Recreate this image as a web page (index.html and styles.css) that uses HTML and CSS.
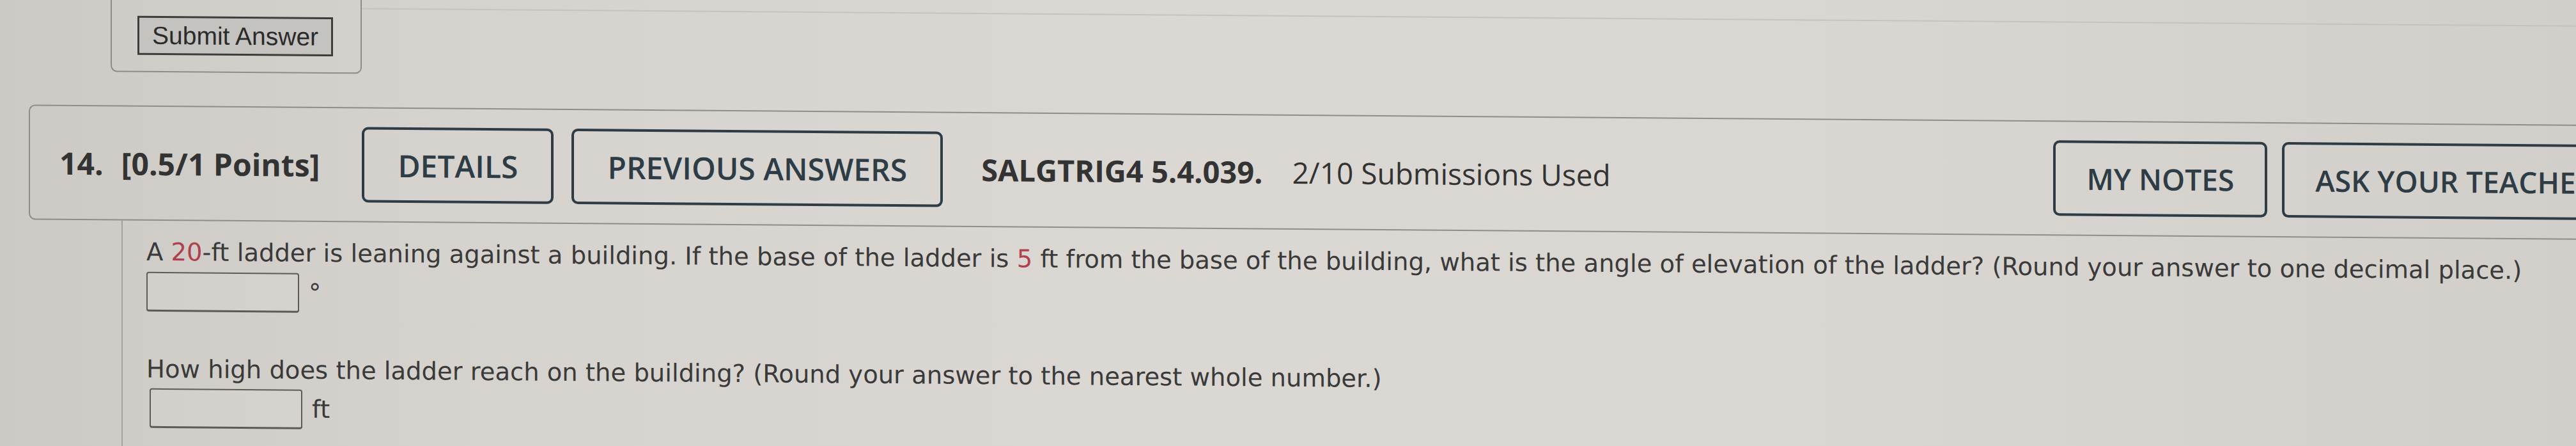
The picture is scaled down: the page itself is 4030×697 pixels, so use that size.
FILE: index.html
```html
<!DOCTYPE html>
<html lang="en">
<head>
<meta charset="utf-8">
<title>Question 14</title>
<link rel="stylesheet" href="styles.css">
</head>
<body>
<div class="sheet">
  <div class="prev-row">
    <div class="submit-box"><button class="submit-btn" type="button">Submit Answer</button></div>
    <div class="prev-rule"></div>
  </div>
  <section class="question">
    <header class="q-head">
      <span class="q-num">14.</span>
      <span class="q-points">[0.5/1 Points]</span>
      <button class="q-btn q-btn-first" type="button">DETAILS</button>
      <button class="q-btn" type="button">PREVIOUS ANSWERS</button>
      <span class="q-code">SALGTRIG4 5.4.039.</span>
      <span class="q-subs">2/10 Submissions Used</span>
      <div class="q-tools">
        <button class="q-btn q-tool" type="button">MY NOTES</button>
        <button class="q-btn q-tool" type="button">ASK YOUR TEACHER</button>
      </div>
    </header>
    <div class="q-body">
      <p class="q-text">A <span class="var">20</span>-ft ladder is leaning against a building. If the base of the ladder is <span class="var">5</span> ft from the base of the building, what is the angle of elevation of the ladder? (Round your answer to one decimal place.)</p>
      <div class="answer"><input class="blank" type="text" aria-label="angle of elevation"><span class="unit">°</span></div>
      <p class="q-text q-text-second">How high does the ladder reach on the building? (Round your answer to the nearest whole number.)</p>
      <div class="answer answer-second"><input class="blank" type="text" aria-label="height reached"><span class="unit">ft</span></div>
    </div>
  </section>
</div>
</body>
</html>
```

FILE: styles.css
```css
html,
body {
  margin: 0;
  height: 697px;
  overflow: hidden;
}

body {
  background: linear-gradient(90deg, #cdcac5 0%, #d6d3ce 18%, #dbd8d3 45%, #dad7d2 70%, #d2cfca 100%);
  font-family: "Open Sans", sans-serif;
  color: #333;
}

/* the whole sheet sits at a slight tilt */
.sheet {
  transform: skewY(0.45deg);
  transform-origin: 0 0;
}

/* tail of the previous question */
.prev-row {
  display: flex;
  align-items: flex-start;
  margin-top: -20px;
}

.submit-box {
  margin-left: 173px;
  width: 393px;
  height: 131px;
  box-sizing: border-box;
  border: 2px solid #8f8d89;
  border-radius: 10px;
  padding: 41px 0 0 40px;
}

.submit-btn {
  height: 61px;
  box-sizing: border-box;
  padding: 0 20px;
  border: 3px solid #3d3d3d;
  border-radius: 0;
  background: #c5c3c0;
  font-family: "Liberation Sans", Arial, sans-serif;
  font-size: 39px;
  color: #2b2b2b;
}

.prev-rule {
  flex: 1;
  margin-top: 28px;
  border-top: 2px solid #c6c3be;
}

/* question card */
.question {
  margin-top: 52px;
}

.q-head {
  margin-left: 45px;
  width: 4100px;
  height: 180px;
  box-sizing: border-box;
  border: 2px solid #8f8d89;
  border-radius: 10px;
  display: flex;
  align-items: center;
  padding: 0 32px 0 46px;
  white-space: nowrap;
}

.q-num,
.q-points,
.q-code {
  font-weight: 700;
  font-size: 48px;
  color: #333;
}

.q-points {
  margin-left: 28px;
}

.q-btn {
  height: 118px;
  box-sizing: border-box;
  margin-left: 28px;
  padding: 0 52px;
  border: 4px solid #2e3c46;
  border-radius: 10px;
  background: transparent;
  font-family: "Open Sans", sans-serif;
  font-weight: 600;
  font-size: 48px;
  color: #2e3c46;
}

.q-btn-first {
  margin-left: 66px;
}

.q-code {
  margin-left: 60px;
  font-size: 47px;
}

.q-subs {
  margin-left: 46px;
  font-size: 46px;
  color: #333;
}

.q-tools {
  margin-left: auto;
  display: flex;
  gap: 23px;
}

.q-tools .q-tool {
  margin-left: 0;
  padding: 0 48px;
  font-size: 46px;
}

/* question body */
.q-body {
  margin-left: 190px;
  height: 354px;
  box-sizing: border-box;
  border-left: 2px solid #a4a29e;
  padding: 26px 0 0 37px;
  font-family: "DejaVu Sans", Verdana, sans-serif;
  font-size: 38.5px;
  color: #3a3a3a;
}

.q-text {
  margin: 0;
  line-height: 46px;
  white-space: nowrap;
}

.q-text-second {
  margin-top: 67px;
}

.var {
  color: #b0404c;
}

.answer {
  display: flex;
  align-items: center;
  gap: 15px;
  margin-top: 8px;
}

.answer-second {
  margin-top: 7px;
  padding-left: 5px;
}

.blank {
  width: 239px;
  height: 62px;
  box-sizing: border-box;
  margin: 0;
  border: 2px solid #5b5b5b;
  border-bottom-width: 3px;
  border-radius: 4px;
  background: rgba(255, 255, 255, 0.07);
}

.unit {
  line-height: 46px;
}
```
